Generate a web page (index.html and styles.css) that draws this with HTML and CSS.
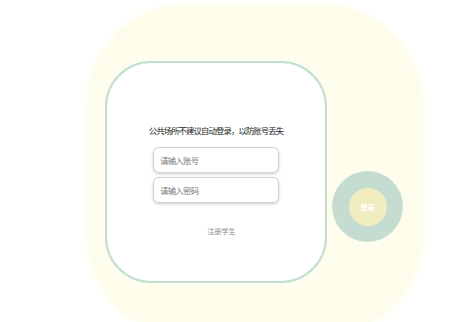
FILE: index.html
```html
<!DOCTYPE html>
<html lang="zh-CN">
<head>
    <meta charset="UTF-8">
    <meta name="viewport" content="width=device-width, initial-scale=1.0">
    <title>登录</title>
    <link rel="stylesheet" href="styles.css">
</head>
<body>

    <div class="backdrop">
        <div class="login-card">
            <p class="tip">公共场所不建议自动登录，以防账号丢失</p>

            <div class="input-group">
                <input type="text" id="account" placeholder="请输入账号">
            </div>
            <div class="input-group">
                <input type="password" id="password" placeholder="请输入密码">
            </div>

            <a class="register" href="#">注册学生</a>
        </div>

        <div class="login-ring">
            <button class="login-button">登录</button>
        </div>
    </div>

</body>
</html>
```

FILE: styles.css
```css
body {
    margin: 0;
    background-color: #fff;
    font-family: "Noto Sans CJK SC", "Liberation Sans", sans-serif;
    overflow: hidden;
}
.backdrop {
    margin: 5px 0 0 88px;
    width: 334px;
    height: 330px;
    border-radius: 100px;
    background-color: #fefdec; /* pale yellow */
    box-shadow: 0 0 6px 2px #fefdec;
    display: flex;
    align-items: flex-start;
}
.login-card {
    margin: 56px 0 0 17px;
    width: 218px;
    height: 218px;
    border: 2px solid #c3ddd0; /* soft green border */
    border-radius: 46px;
    background-color: #fff;
    display: flex;
    flex-direction: column;
    align-items: center;
}
.tip {
    margin: 61px 0 9px;
    font-size: 8.4px;
    line-height: 12px;
    letter-spacing: -0.9px;
    color: #222;
}
.input-group {
    margin-bottom: 2px;
}
.input-group input {
    box-sizing: border-box;
    width: 126px;
    height: 26px;
    padding: 0 6px;
    border: 1px solid #d4d4d4;
    border-radius: 6px;
    box-shadow: 0 1px 3px rgba(0, 0, 0, 0.2);
    font-family: inherit;
    font-size: 8.4px;
    letter-spacing: -0.7px;
    background-color: #fff;
    outline: none;
}
.input-group input::placeholder {
    color: #777;
}
.register {
    margin: 21px 0 0 11px;
    font-size: 7px;
    line-height: 10px;
    color: #888;
    text-decoration: none;
}
.login-ring {
    margin: 166px 0 0 5px;
    width: 71px;
    height: 71px;
    border-radius: 50%;
    background-color: #c5ddd1; /* green ring */
    display: flex;
    justify-content: center;
    align-items: center;
}
.login-button {
    width: 38px;
    height: 38px;
    padding: 0;
    border: none;
    border-radius: 50%;
    background-color: #f2ecc1; /* cream center */
    color: #fff;
    font-family: inherit;
    font-size: 7px;
    font-weight: bold;
    cursor: pointer;
}
```
